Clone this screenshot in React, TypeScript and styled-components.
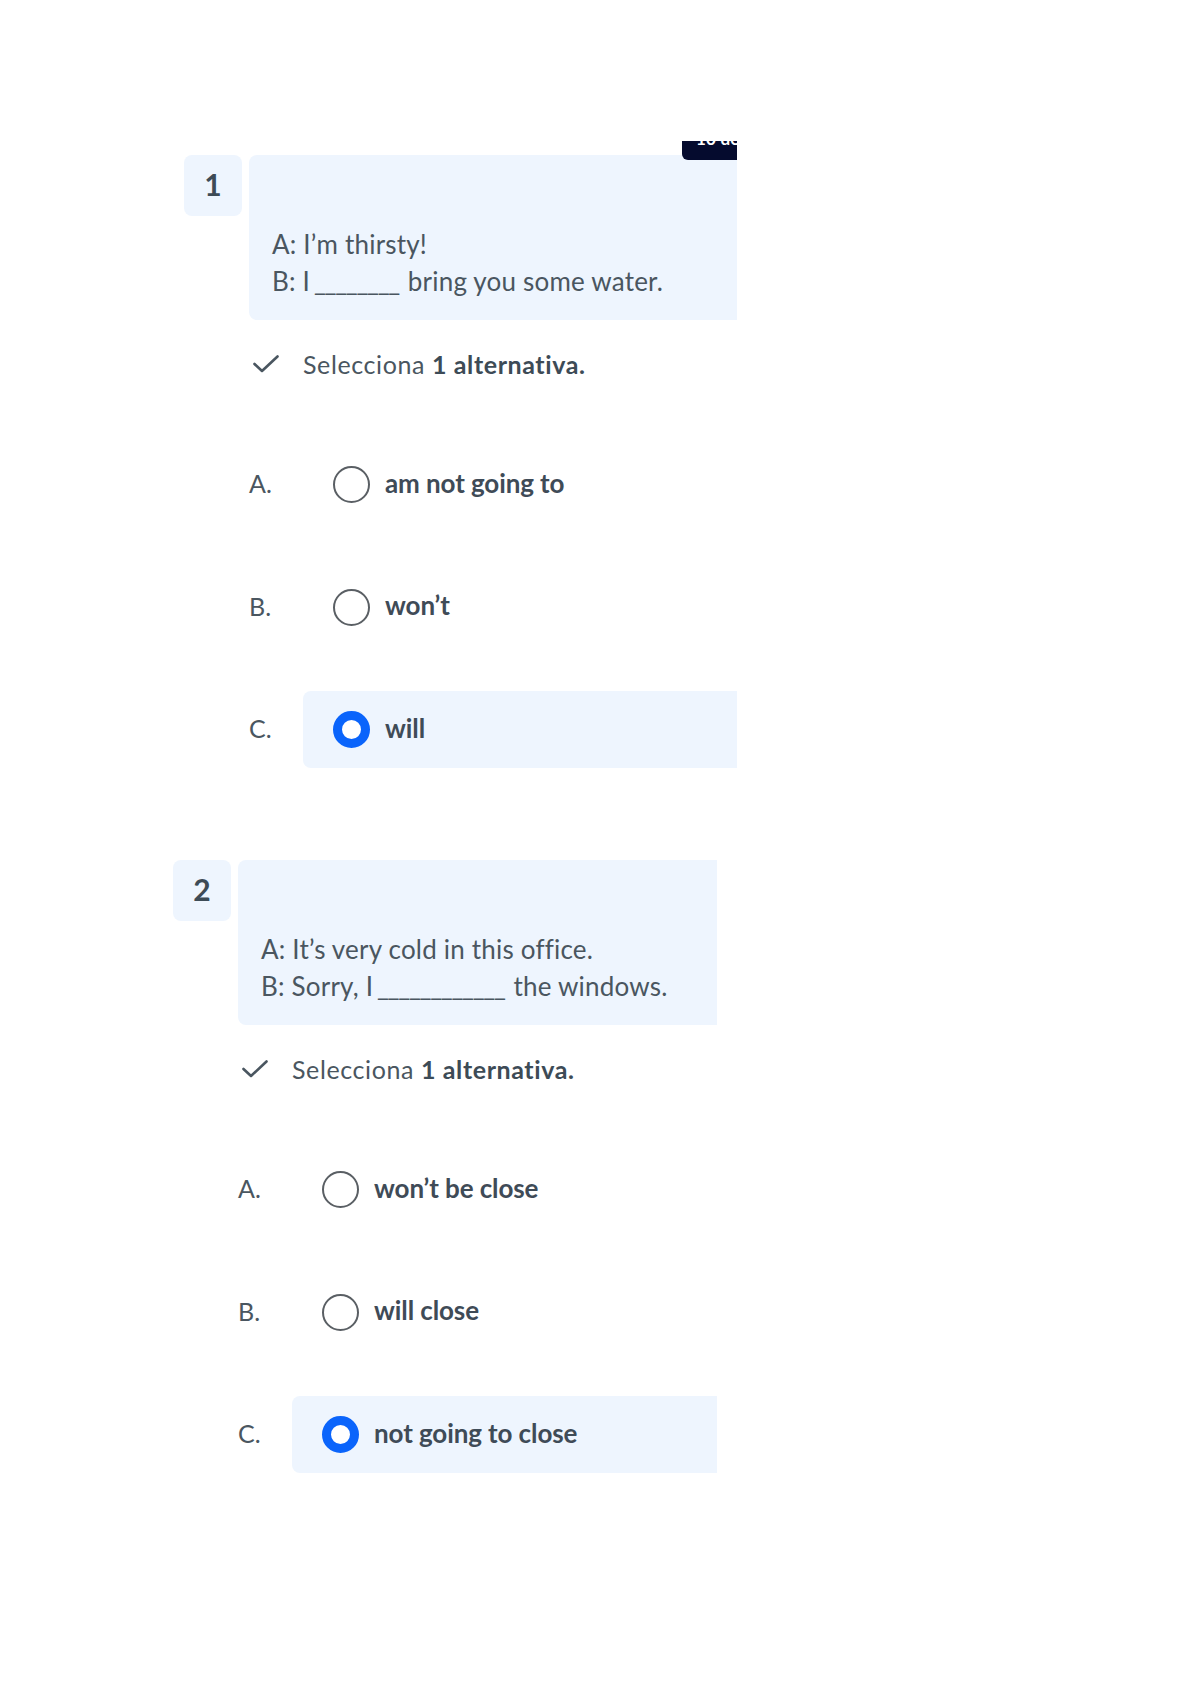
import React from "react";
import styled, { createGlobalStyle } from "styled-components";

const GlobalStyle = createGlobalStyle`
  html, body { margin: 0; padding: 0; background: #ffffff; }
  body { font-family: Lato, "Open Sans", "Liberation Sans", sans-serif; color: #46525d; }
`;

const Page = styled.div`
  width: 1200px;
  min-height: 1696px;
  padding-top: 155px;
  box-sizing: border-box;
  display: flex;
  flex-direction: column;
`;

const Block = styled.section<{ $left: number; $width: number; $top: number }>`
  margin-left: ${(p) => p.$left}px;
  margin-top: ${(p) => p.$top}px;
  width: ${(p) => p.$width}px;
  display: flex;
  flex-direction: column;
`;

const Header = styled.div`
  display: flex;
  gap: 7px;
  align-items: flex-start;
`;

const NumberBox = styled.div`
  width: 58px;
  height: 61px;
  flex: none;
  box-sizing: border-box;
  padding-bottom: 4px;
  border-radius: 8px;
  background: #eef5fe;
  display: flex;
  align-items: center;
  justify-content: center;
  font-weight: 700;
  font-size: 30px;
  color: #3d4b56;
`;

const Card = styled.div`
  position: relative;
  flex: 1;
  min-height: 165px;
  box-sizing: border-box;
  background: #eef5fe;
  border-radius: 8px 0 0 8px;
  padding: 0 20px 20px 23px;
  display: flex;
  flex-direction: column;
  justify-content: flex-end;
  font-size: 26px;
  line-height: 37px;
  color: #4a5660;
  letter-spacing: 0.2px;
`;

const Blank = styled.span`
  letter-spacing: -1.3px;
  margin-left: -3px;
  margin-right: 2px;
`;

const Badge = styled.div`
  position: absolute;
  top: -14px;
  right: 0;
  width: 55px;
  height: 19px;
  overflow: hidden;
  background: #050b2e;
  border-radius: 0 0 0 6px;
`;

const BadgeText = styled.span`
  display: block;
  margin-top: -11px;
  padding-left: 14px;
  font-size: 17px;
  line-height: 18px;
  font-weight: 700;
  color: #ffffff;
  white-space: nowrap;
`;

const Instruction = styled.div`
  margin-top: 29px;
  padding-left: 69px;
  height: 30px;
  display: flex;
  align-items: center;
  gap: 24px;
  font-size: 25px;
  line-height: 30px;
  color: #4a5660;
  letter-spacing: 0.6px;
  b { font-weight: 700; color: #3d4b56; }
`;

const Options = styled.div`
  margin-top: 67px;
  display: flex;
  flex-direction: column;
  gap: 45.5px;
`;

const OptionRow = styled.div`
  display: flex;
  align-items: center;
  padding-left: 65px;
`;

const Letter = styled.span`
  width: 54px;
  flex: none;
  font-size: 25px;
  color: #4a5660;
  padding-bottom: 3px;
`;

const OptionBox = styled.div<{ $selected: boolean }>`
  flex: 1;
  height: 77px;
  box-sizing: border-box;
  padding-left: 30px;
  display: flex;
  align-items: center;
  gap: 15px;
  border-radius: 8px 0 0 8px;
  background: ${(p) => (p.$selected ? "#eef5fe" : "transparent")};
`;

const Radio = styled.span<{ $selected: boolean }>`
  width: 37px;
  height: 37px;
  flex: none;
  box-sizing: border-box;
  border-radius: 50%;
  background: #ffffff;
  border: ${(p) => (p.$selected ? "9px solid #0a64fb" : "2px solid #5a5f64")};
`;

const OptionText = styled.span`
  font-size: 26px;
  font-weight: 700;
  letter-spacing: -0.1px;
  color: #3f4b57;
  padding-bottom: 4px;
`;

const CheckIcon = () => (
  <svg width="26" height="18" viewBox="0 0 26 18" fill="none">
    <polyline points="1.5,9 9,16 24.5,1.5" stroke="#4a5660" strokeWidth="2.6" strokeLinecap="round" strokeLinejoin="round" />
  </svg>
);

type Line = { before: string; blank?: string; after?: string };

type Q = {
  n: number;
  left: number;
  width: number;
  top: number;
  lines: Line[];
  options: string[];
  selected: number;
  badge?: boolean;
};

const questions: Q[] = [
  {
    n: 1,
    left: 184,
    width: 553,
    top: 0,
    lines: [
      { before: "A: I’m thirsty!" },
      { before: "B: I ", blank: "________", after: " bring you some water." },
    ],
    options: ["am not going to", "won’t", "will"],
    selected: 2,
    badge: true,
  },
  {
    n: 2,
    left: 173,
    width: 544,
    top: 92,
    lines: [
      { before: "A: It’s very cold in this office." },
      { before: "B: Sorry, I ", blank: "____________", after: " the windows." },
    ],
    options: ["won’t be close", "will close", "not going to close"],
    selected: 2,
  },
];

const letters = ["A.", "B.", "C."];

export default function App() {
  return (
    <>
      <GlobalStyle />
      <Page>
        {questions.map((q) => (
          <Block key={q.n} $left={q.left} $width={q.width} $top={q.top}>
            <Header>
              <NumberBox>{q.n}</NumberBox>
              <Card>
                {q.badge && (
                  <Badge>
                    <BadgeText>10 de 10</BadgeText>
                  </Badge>
                )}
                {q.lines.map((l) => (
                  <div key={l.before}>
                    {l.before}
                    {l.blank && <Blank>{l.blank}</Blank>}
                    {l.after}
                  </div>
                ))}
              </Card>
            </Header>
            <Instruction>
              <CheckIcon />
              <span>
                Selecciona <b>1 alternativa.</b>
              </span>
            </Instruction>
            <Options>
              {q.options.map((o, i) => (
                <OptionRow key={o}>
                  <Letter>{letters[i]}</Letter>
                  <OptionBox $selected={i === q.selected}>
                    <Radio $selected={i === q.selected} />
                    <OptionText>{o}</OptionText>
                  </OptionBox>
                </OptionRow>
              ))}
            </Options>
          </Block>
        ))}
      </Page>
    </>
  );
}
